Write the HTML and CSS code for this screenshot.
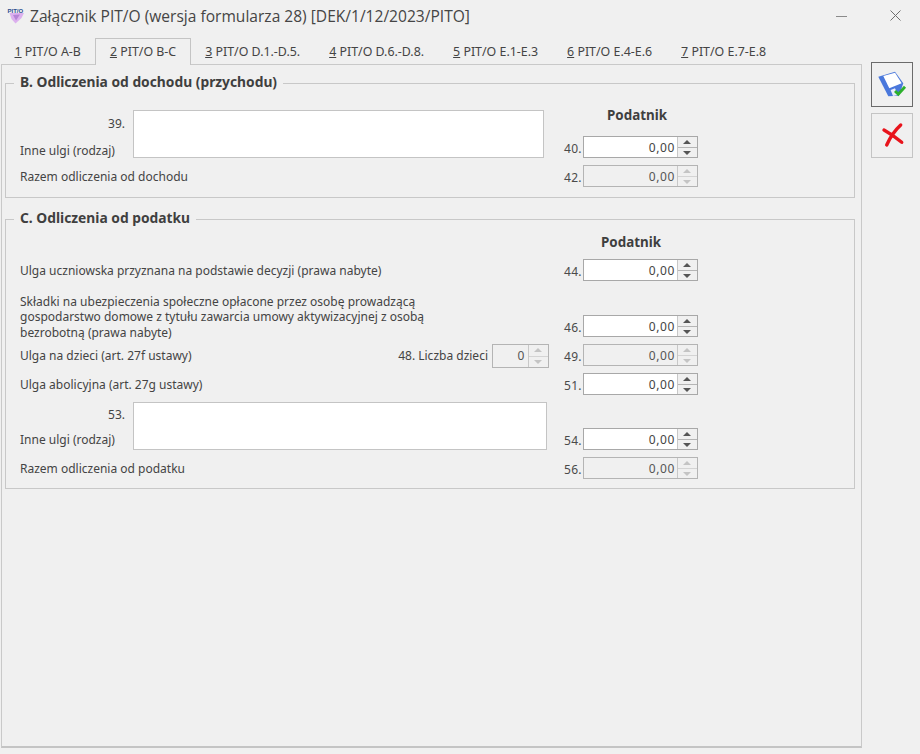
FILE: index.html
```html
<!DOCTYPE html>
<html lang="pl">
<head>
<meta charset="utf-8">
<title>Załącznik PIT/O</title>
<link rel="stylesheet" href="styles.css">
</head>
<body>
<div class="window">
  <header class="titlebar">
    <svg class="app-icon" width="18" height="18" viewBox="0 0 18 18"><path d="M2.500 7H17l-2.500 5-6 5.500L4.500 13z" fill="#dcb0ee"/><path d="M6 9l7-.5-4 6z" fill="#b684d6"/><text class="app-icon-text" x="0.500" y="6.500">PIT/O</text></svg>
    <h1 class="title">Załącznik PIT/O (wersja formularza 28) [DEK/1/12/2023/PITO]</h1>
    <svg class="win-btn win-min" width="11" height="11" viewBox="0 0 11 11"><path d="M0 5.500h11" stroke="#8a8a8a" stroke-width="1"/></svg>
    <svg class="win-btn win-close" width="11" height="11" viewBox="0 0 11 11"><path d="M.5.500l10 10M10.500.500l-10 10" stroke="#6f6f6f" stroke-width="1"/></svg>
  </header>
  <nav class="tabs">
    <span class="tab"><u>1</u> PIT/O A-B</span>
    <span class="tab tab-active"><u>2</u> PIT/O B-C</span>
    <span class="tab"><u>3</u> PIT/O D.1.-D.5.</span>
    <span class="tab"><u>4</u> PIT/O D.6.-D.8.</span>
    <span class="tab"><u>5</u> PIT/O E.1-E.3</span>
    <span class="tab"><u>6</u> PIT/O E.4-E.6</span>
    <span class="tab"><u>7</u> PIT/O E.7-E.8</span>
  </nav>
  <div class="body">
    <main class="panel">
      <fieldset class="group group-b">
        <legend>B. Odliczenia od dochodu (przychodu)</legend>
        <div class="memo-row memo-row-b">
          <div class="memo-labels"><span class="memo-no">39.</span><span class="memo-lbl">Inne ulgi (rodzaj)</span></div>
          <div class="memo memo-b"></div>
          <div class="memo-side">
            <div class="podatnik">Podatnik</div>
            <div class="field"><span class="no">40.</span><div class="spin"><span class="val">0,00</span><span class="arrows"><i class="up"></i><i class="down"></i></span></div></div>
          </div>
        </div>
        <div class="row"><span class="lbl">Razem odliczenia od dochodu</span><div class="field"><span class="no">42.</span><div class="spin off"><span class="val">0,00</span><span class="arrows"><i class="up"></i><i class="down"></i></span></div></div></div>
      </fieldset>
      <fieldset class="group group-c">
        <legend>C. Odliczenia od podatku</legend>
        <div class="podatnik podatnik-c">Podatnik</div>
        <div class="row row-44"><span class="lbl">Ulga uczniowska przyznana na podstawie decyzji (prawa nabyte)</span><div class="field"><span class="no">44.</span><div class="spin"><span class="val">0,00</span><span class="arrows"><i class="up"></i><i class="down"></i></span></div></div></div>
        <div class="row row-46"><span class="lbl lbl-multi">Składki na ubezpieczenia społeczne opłacone przez osobę prowadzącą<br>gospodarstwo domowe z tytułu zawarcia umowy aktywizacyjnej z osobą<br>bezrobotną (prawa nabyte)</span><div class="field"><span class="no">46.</span><div class="spin"><span class="val">0,00</span><span class="arrows"><i class="up"></i><i class="down"></i></span></div></div></div>
        <div class="row row-49"><span class="lbl">Ulga na dzieci (art. 27f ustawy)</span><span class="kids-lbl">48. Liczba dzieci</span><div class="spin spin-kids off"><span class="val">0</span><span class="arrows"><i class="up"></i><i class="down"></i></span></div><div class="field"><span class="no">49.</span><div class="spin off"><span class="val">0,00</span><span class="arrows"><i class="up"></i><i class="down"></i></span></div></div></div>
        <div class="row"><span class="lbl">Ulga abolicyjna (art. 27g ustawy)</span><div class="field"><span class="no">51.</span><div class="spin"><span class="val">0,00</span><span class="arrows"><i class="up"></i><i class="down"></i></span></div></div></div>
        <div class="memo-row memo-row-c">
          <div class="memo-labels"><span class="memo-no">53.</span><span class="memo-lbl">Inne ulgi (rodzaj)</span></div>
          <div class="memo memo-c"></div>
          <div class="memo-side memo-side-c">
            <div class="field"><span class="no">54.</span><div class="spin"><span class="val">0,00</span><span class="arrows"><i class="up"></i><i class="down"></i></span></div></div>
          </div>
        </div>
        <div class="row"><span class="lbl">Razem odliczenia od podatku</span><div class="field"><span class="no">56.</span><div class="spin off"><span class="val">0,00</span><span class="arrows"><i class="up"></i><i class="down"></i></span></div></div></div>
      </fieldset>
    </main>
    <aside class="actions">
      <button class="action action-save" type="button" aria-label="Zapisz">
        <svg width="40" height="43" viewBox="1 1 40 43"><path d="M7.300 14.700L24 9.700l8.300 11.600L28 33.700l-10.700.6z" fill="#4a78dc"/><path d="M12.300 14L24 10.700l6.700 10.600-12.400 5z" fill="#fff"/><path d="M19.600 28l4.400-1.700 3 6.700-5 1z" fill="#e8eefb"/><path d="M24 29l3.300 3.300 6.700-7.600" fill="none" stroke="#2cb02c" stroke-width="2.800"/></svg>
      </button>
      <button class="action" type="button" aria-label="Anuluj">
        <svg width="40" height="43" viewBox="1 1 40 43"><path d="M29.700 12Q21 20 15.700 32M13 17q9 5 17.700 12.300" fill="none" stroke="#e8141c" stroke-width="3.400" stroke-linecap="round"/></svg>
      </button>
    </aside>
  </div>
</div>
</body>
</html>
```

FILE: styles.css
```css
* { box-sizing: border-box; }
html, body { margin: 0; height: 100%; }
body {
  background: #f0f0f0;
  color: #444;
  font: 12px/15px "Noto Sans", "DejaVu Sans", sans-serif;
  overflow: hidden;
}
.window { width: 920px; height: 754px; display: flex; flex-direction: column; }

.titlebar { height: 38px; display: flex; align-items: center; padding: 0 0 6px 7px; flex: none; }
.app-icon { flex: none; margin-bottom: 3px; }
.app-icon-text { font: 700 6px "Liberation Sans", sans-serif; fill: #2d4f8e; }
.title { flex: 1; margin: 0 0 0 5px; font: 400 15.570px/22px "Open Sans", sans-serif; color: #454545; }
.win-btn { flex: none; }
.win-min { margin-right: 43px; }
.win-close { margin-right: 19px; margin-bottom: 2px; }

.tabs { display: flex; height: 26px; flex: none; position: relative; z-index: 1; }
.tab { padding: 6px 14.500px 0; white-space: nowrap; font-size: 12.400px; }
.tab-active {
  background: #f0f0f0;
  border: 1px solid #c4c4c4;
  border-bottom: 0;
  padding: 5px 13.500px 0;
  height: 27px;
}

.body { flex: 1; display: flex; min-height: 0; padding-bottom: 6px; }
.panel {
  width: 861px;
  margin-left: 1px;
  border: 1px solid #c9c9c9;
  border-bottom: 2px solid #c4c4c4;
  padding: 10px 6px 0 3px;
}
.group {
  margin: 0;
  padding: 0 0 0 14px;
  border: 1px solid #c8c8c8;
  min-width: 0;
}
.group legend { margin-left: -6px; padding: 0 6px 3px; font-weight: 700; font-size: 13.800px; line-height: 14px; color: #3f3f3f; }
.group-b { height: 123px; }
.group-c { height: 278px; margin-top: 13px; }

.row { display: flex; align-items: center; height: 22px; margin-top: 7px; padding-right: 156px; }
.lbl { flex: 1; white-space: nowrap; }
.field { display: flex; align-items: center; flex: none; width: 134px; }
.no { width: 19px; flex: none; padding-top: 2px; color: #4a4a4a; letter-spacing: .3px; }

.spin { width: 115px; height: 22px; flex: none; display: flex; background: #fff; border: 1px solid #a8a8a8; }
.val { flex: 1; text-align: right; padding: 1px 2px 0 0; line-height: 19px; letter-spacing: .6px; }
.arrows { width: 20px; display: flex; flex-direction: column; background: #f0f0f0; border-left: 1px solid #c8c8c8; flex: none; }
.arrows i { flex: 1; position: relative; display: block; }
.arrows .up { border-bottom: 1px solid #b5b5b5; }
.arrows i::after { content: ""; position: absolute; left: 5px; top: 3px; border: 4px solid transparent; border-top: 0; border-bottom: 4px solid #555; }
.arrows .down::after { border-bottom: 0; border-top: 4px solid #555; top: 3px; }
.off { background: #f0f0f0; border-color: #b4b4b4; }
.off .arrows .up { border-bottom-color: #d4d4d4; }
.off .arrows i::after { border-bottom-color: #c4c4c4; }
.off .arrows .down::after { border-bottom-color: transparent; border-top-color: #c4c4c4; }
.off .val { color: #555; }

.memo-row { display: flex; height: 48px; margin-top: 7px; }
.memo-row-b { margin-top: 18px; }
.memo-labels { width: 113px; flex: none; display: flex; flex-direction: column; padding-top: 5px; }
.memo-row-b .memo-labels { padding-top: 6px; }
.memo-no { text-align: right; padding-right: 8px; }
.memo-lbl { margin-top: 10px; }
.memo-row-b .memo-lbl { margin-top: 12px; }
.memo { background: #fff; border: 1px solid #c4c4c4; flex: none; height: 48px; }
.memo-b { width: 411px; }
.memo-c { width: 414px; }
.memo-side { margin-left: 20px; width: 134px; display: flex; flex-direction: column; justify-content: flex-end; }
.memo-side-c { margin-left: 17px; }
.podatnik { font-weight: 700; font-size: 13.400px; line-height: 17px; text-align: center; padding-left: 12px; margin-bottom: 12px; color: #3f3f3f; }
.podatnik-c { width: 678px; margin: 6px 0 0; text-align: right; padding: 0 37px 0 0; }
.row-44 { margin-top: 8px; }
.row-46 { height: 44px; margin-top: 12px; align-items: flex-end; }
.lbl-multi { align-self: flex-start; padding-top: 1px; line-height: 15.300px; }
.kids-lbl { flex: none; margin-right: 4px; }
.spin-kids { width: 57px; height: 24px; margin-right: 15px; align-self: flex-start; }
.spin-kids .val { padding-right: 3px; }

.actions { display: flex; flex-direction: column; gap: 6px; margin-top: -2px; padding-left: 9px; }
.action { width: 42px; height: 45px; padding: 0; display: flex; align-items: center; justify-content: center; background: #f0f0f0; border: 1px solid #c4c4c4; }
.action-save { border-color: #6b6b6b; }
```
